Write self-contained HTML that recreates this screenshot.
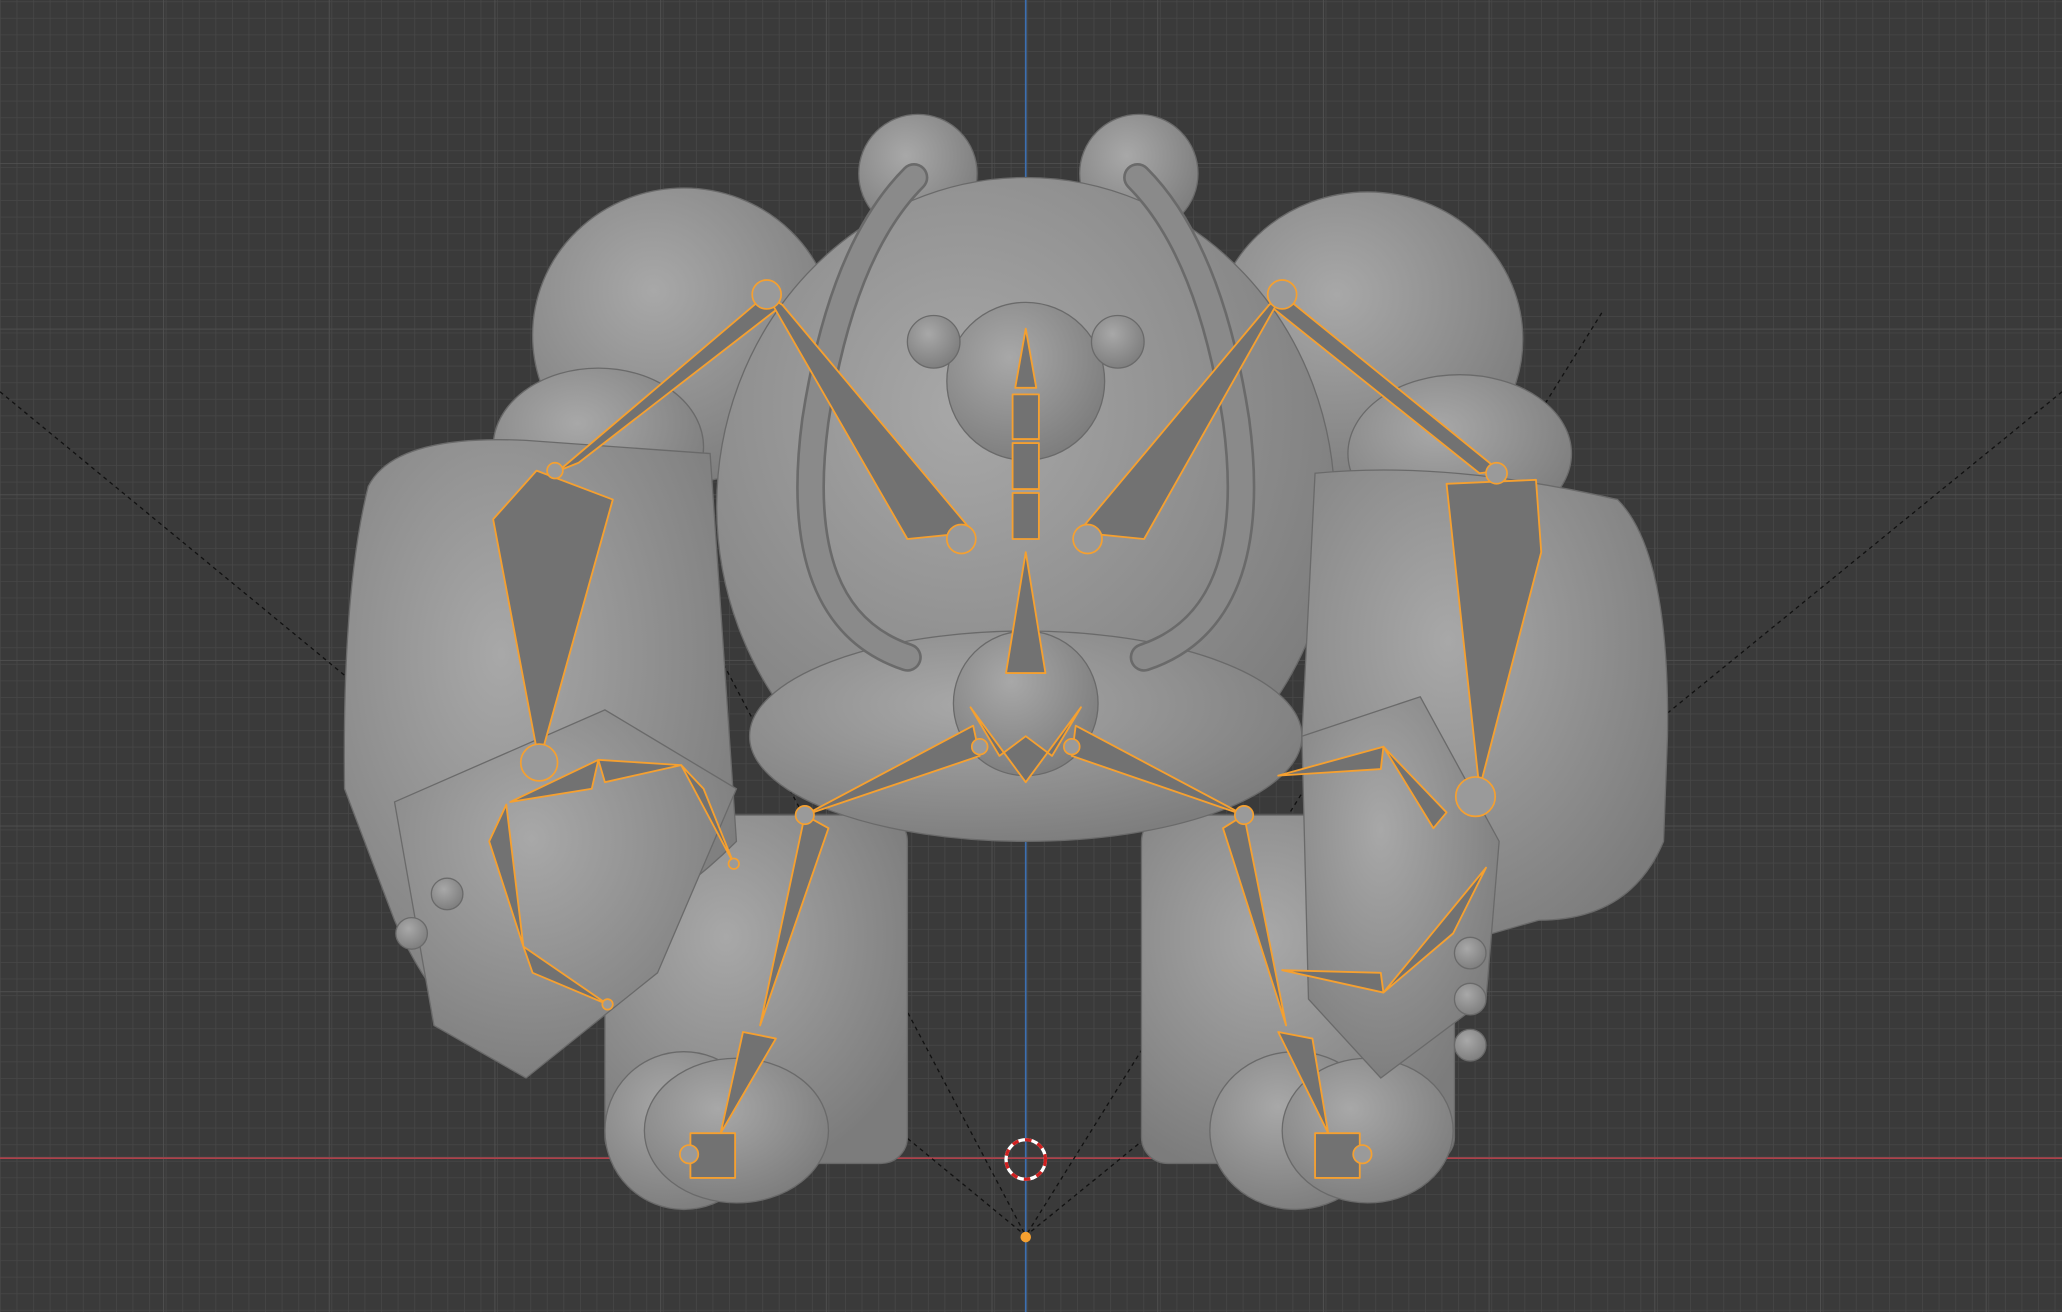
<!DOCTYPE html>
<html><head><meta charset="utf-8"><style>html,body{margin:0;padding:0;background:#3a3a3a;overflow:hidden}svg{display:block}</style></head>
<body>
<svg width="2062" height="1312" viewBox="0 0 1568 998" preserveAspectRatio="none" xmlns="http://www.w3.org/2000/svg">
<defs>
<pattern id="g" x="0" y="1" width="12.6" height="12.6" patternUnits="userSpaceOnUse">
<path d="M0 0H12.6M0 0V12.6" stroke="#474747" stroke-width="1.2" fill="none"/>
</pattern>
<pattern id="G" x="-2" y="-2" width="126" height="126" patternUnits="userSpaceOnUse">
<path d="M0 0H126M0 0V126" stroke="#505050" stroke-width="1.4" fill="none"/>
</pattern>
<radialGradient id="s" cx="0.4" cy="0.35" r="0.7"><stop offset="0" stop-color="#a8a8a8"/><stop offset="1" stop-color="#7c7c7c"/></radialGradient>
</defs>
<rect width="1568" height="998" fill="#3a3a3a"/>
<rect width="1568" height="998" fill="url(#g)"/>
<rect width="1568" height="998" fill="url(#G)"/>
<line x1="780" y1="0" x2="780" y2="998" stroke="#3d6fb0" stroke-width="1.3"/>
<line x1="0" y1="881" x2="1568" y2="881" stroke="#b0404a" stroke-width="1.3"/>
<g stroke="#111" stroke-width="1" stroke-dasharray="3,3" fill="none">
<line x1="0" y1="298" x2="780" y2="940"/><line x1="1568" y1="298" x2="780" y2="940"/>
<line x1="410" y1="240" x2="780" y2="940"/><line x1="1218" y1="238" x2="780" y2="940"/>
</g>
<!-- robot -->
<g fill="url(#s)" stroke="#6a6a6a" stroke-width="1">
<circle cx="698" cy="132" r="45"/><circle cx="866" cy="132" r="45"/>
<ellipse cx="520" cy="255" rx="115" ry="112"/><ellipse cx="1040" cy="258" rx="118" ry="112"/>
<ellipse cx="455" cy="340" rx="80" ry="60"/><ellipse cx="1110" cy="345" rx="85" ry="60"/>
<ellipse cx="780" cy="385" rx="235" ry="250"/>
<rect x="460" y="620" width="230" height="265" rx="20"/>
<rect x="868" y="620" width="238" height="265" rx="20"/>
<ellipse cx="520" cy="860" rx="60" ry="60"/><ellipse cx="985" cy="860" rx="65" ry="60"/>
<ellipse cx="1040" cy="860" rx="65" ry="55"/><ellipse cx="560" cy="860" rx="70" ry="55"/>
<ellipse cx="780" cy="560" rx="210" ry="80"/>
<path d="M280 370 Q300 330 400 335 L540 345 L560 640 Q500 700 430 720 L380 800 Q330 770 300 700 L262 600 Q260 450 280 370Z"/>
<path d="M300 610 L460 540 L560 600 L500 740 L400 820 L330 780Z"/>
<path d="M1000 360 Q1100 350 1230 380 Q1270 420 1268 560 L1265 640 Q1240 700 1170 700 L1100 720 L1010 730 L990 560Z"/>
<path d="M990 560 L1080 530 L1140 640 L1130 760 L1050 820 L995 760Z"/>
<circle cx="313" cy="710" r="12"/><circle cx="340" cy="680" r="12"/><circle cx="1118" cy="725" r="12"/><circle cx="1118" cy="760" r="12"/><circle cx="1118" cy="795" r="12"/>
<circle cx="780" cy="290" r="60"/><circle cx="710" cy="260" r="20"/><circle cx="850" cy="260" r="20"/>
<circle cx="780" cy="535" r="55"/>
</g>
<g fill="none" stroke="#6a6a6a" stroke-width="22" stroke-linecap="round">
<path d="M695 135 Q640 190 620 320 Q600 470 690 500"/><path d="M865 135 Q920 190 940 320 Q960 470 870 500"/>
</g>
<g fill="none" stroke="#8a8a8a" stroke-width="18" stroke-linecap="round">
<path d="M695 135 Q640 190 620 320 Q600 470 690 500"/><path d="M865 135 Q920 190 940 320 Q960 470 870 500"/>
</g>
<!-- bones -->
<g fill="#727272" stroke="#f5a030" stroke-width="1.4" stroke-linejoin="round">
<path d="M583 224 L425 358 L440 352 L595 232Z"/>
<path d="M583 224 L690 410 L740 405 L595 232Z"/>
<path d="M975 224 L1140 358 L1125 360 L965 232Z"/>
<path d="M975 224 L870 410 L820 405 L965 232Z"/>
<path d="M375 395 L408 358 L466 380 L410 580Z"/>
<path d="M1100 368 L1168 365 L1172 420 L1125 600Z"/>
<path d="M780 250 L772 295 L788 295Z M770 300 L790 300 L790 334 L770 334Z M770 337 L790 337 L790 372 L770 372Z M770 375 L790 375 L790 410 L770 410Z M780 420 L765 512 L795 512Z"/>
<path d="M738 538 L780 595 L822 538 L800 575 L780 560 L760 575Z"/>
<path d="M612 620 L740 552 L745 575Z"/><path d="M946 620 L818 552 L815 575Z"/>
<path d="M612 620 L630 630 L578 780Z"/><path d="M946 620 L930 630 L978 780Z"/>
<path d="M565 785 L590 790 L548 862Z"/><path d="M972 785 L998 790 L1010 862Z"/>
<rect x="525" y="862" width="34" height="34"/><rect x="1000" y="862" width="34" height="34"/>
<path d="M388 610 L455 578 L450 600Z"/><path d="M455 578 L518 582 L460 595Z"/><path d="M518 582 L558 657 L535 600Z"/>
<path d="M385 612 L372 640 L398 720Z"/><path d="M398 720 L462 764 L405 740Z"/>
<path d="M972 590 L1052 568 L1050 585Z"/><path d="M1052 568 L1100 618 L1090 630Z"/>
<path d="M975 738 L1052 755 L1050 740Z"/><path d="M1052 755 L1130 660 L1105 710Z"/>
</g>
<g fill="#9a9a9a" stroke="#f5a030" stroke-width="1.3">
<circle cx="583" cy="224" r="11"/><circle cx="975" cy="224" r="11"/><circle cx="731" cy="410" r="11"/><circle cx="827" cy="410" r="11"/>
<circle cx="410" cy="580" r="14"/><circle cx="1122" cy="606" r="15"/><circle cx="612" cy="620" r="7"/><circle cx="946" cy="620" r="7"/>
<circle cx="524" cy="878" r="7"/><circle cx="1036" cy="878" r="7"/><circle cx="462" cy="764" r="4"/><circle cx="558" cy="657" r="4"/>
<circle cx="1138" cy="360" r="8"/><circle cx="422" cy="358" r="6"/><circle cx="745" cy="568" r="6"/><circle cx="815" cy="568" r="6"/>
</g>
<circle cx="780" cy="882" r="15" fill="none" stroke="#fff" stroke-width="2.5"/>
<circle cx="780" cy="882" r="15" fill="none" stroke="#d02020" stroke-width="2.5" stroke-dasharray="5,5"/>
<circle cx="780" cy="941" r="4" fill="#f5a030"/>
</svg>
</body></html>
